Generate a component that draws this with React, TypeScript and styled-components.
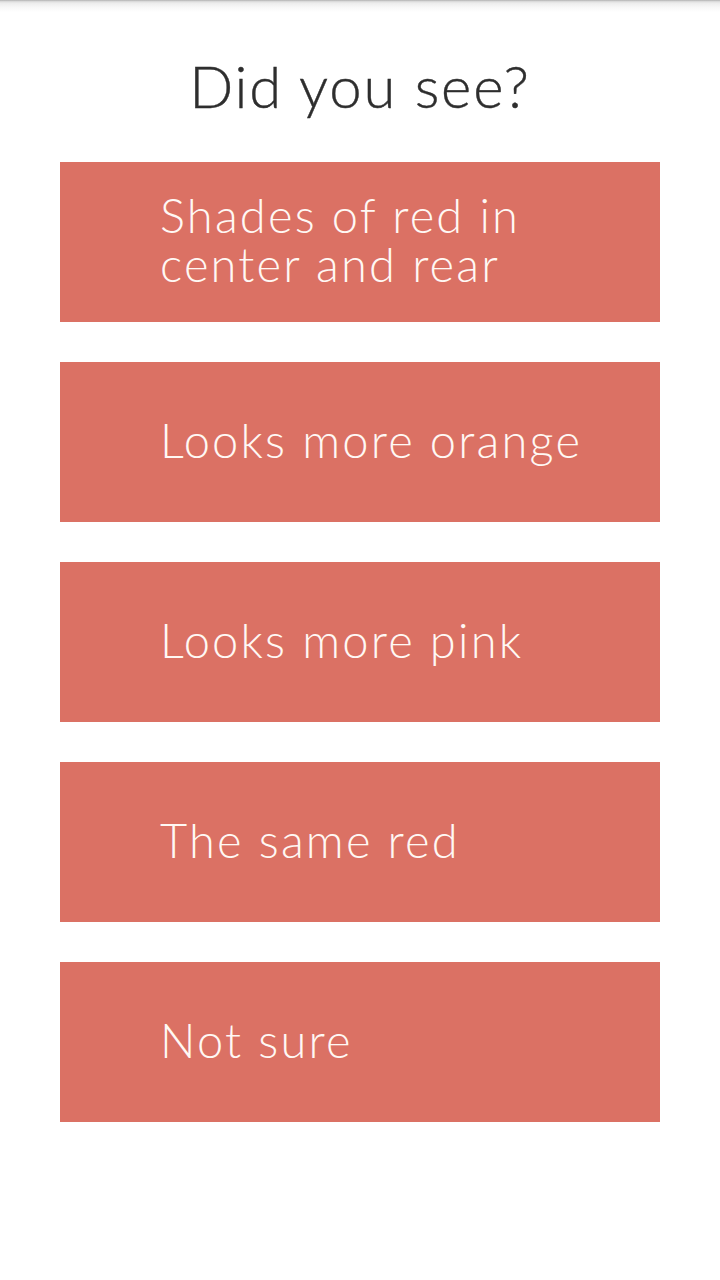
import React from "react";
import styled, { createGlobalStyle } from "styled-components";

const GlobalStyle = createGlobalStyle`
  html, body {
    margin: 0;
    padding: 0;
    background: #ffffff;
  }
  body {
    font-family: Lato, "Open Sans", sans-serif;
  }
`;

const Page = styled.div`
  width: 720px;
  min-height: 1280px;
  background: #ffffff;
  display: flex;
  flex-direction: column;
  align-items: center;
`;

// soft shadow cast by the status bar above
const TopShade = styled.div`
  align-self: stretch;
  height: 12px;
  background: linear-gradient(
    to bottom,
    #a9a9a9 0px,
    #d4d4d4 1px,
    #ececec 3px,
    #f7f7f7 7px,
    #ffffff 12px
  );
`;

const Title = styled.h1`
  margin: 42px 0 0;
  font-family: Lato, sans-serif;
  font-weight: 300;
  font-size: 58px;
  line-height: 64px;
  letter-spacing: 1.8px;
  color: #2e2e2e;
  -webkit-text-stroke: 0.4px #2e2e2e;
`;

const Options = styled.div`
  margin-top: 44px;
  width: 600px;
  display: flex;
  flex-direction: column;
  gap: 40px;
`;

const Option = styled.button`
  height: 160px;
  border: none;
  border-radius: 0;
  background: #db7164;
  color: #fff8f4;
  display: flex;
  align-items: center;
  padding: 0 40px 4px 100px;
  text-align: left;
  font-family: Lato, sans-serif;
  font-weight: 300;
  font-size: 47px;
  line-height: 49px;
  letter-spacing: 2.2px;
  cursor: pointer;
`;

const answers = [
  "Shades of red in center and rear",
  "Looks more orange",
  "Looks more pink",
  "The same red",
  "Not sure",
];

const App = () => {
  return (
    <Page>
      <GlobalStyle />
      <TopShade />
      <Title>Did you see?</Title>
      <Options>
        {answers.map((a) => (
          <Option key={a}>{a}</Option>
        ))}
      </Options>
    </Page>
  );
};

export default App;
